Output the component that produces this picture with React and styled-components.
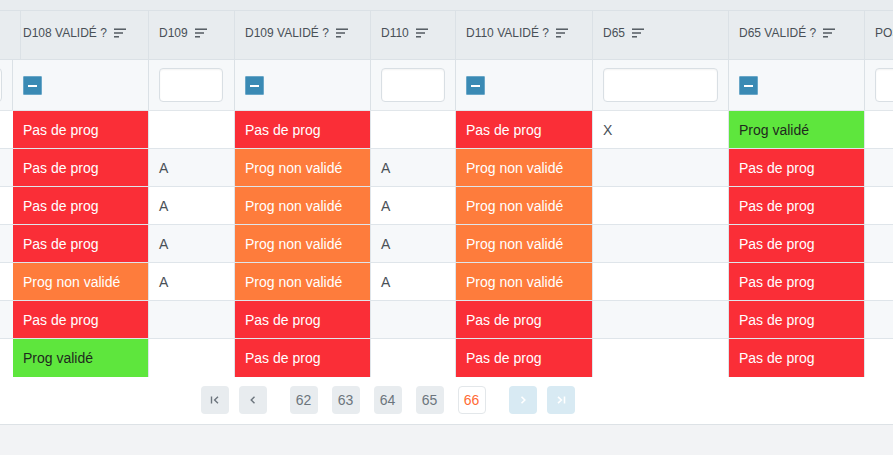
import styled, { createGlobalStyle } from 'styled-components';

const GlobalStyle = createGlobalStyle`
   html, body {
      margin: 0;
      padding: 0;
      background: #f2f3f5;
      font-family: 'Liberation Sans', Arial, sans-serif;
   }
   * {
      box-sizing: border-box;
   }
`;

const RED = 'red';
const ORANGE = 'orange';
const GREEN = 'green';

const columns = [
   { key: 'prev', label: '', type: 'text', width: 13 },
   { key: 'd108v', label: 'D108 Validé ?', type: 'check', width: 136 },
   { key: 'd109', label: 'D109', type: 'text', width: 86 },
   { key: 'd109v', label: 'D109 Validé ?', type: 'check', width: 136 },
   { key: 'd110', label: 'D110', type: 'text', width: 85 },
   { key: 'd110v', label: 'D110 Validé ?', type: 'check', width: 137 },
   { key: 'd65', label: 'D65', type: 'text', width: 136 },
   { key: 'd65v', label: 'D65 Validé ?', type: 'check', width: 136 },
   { key: 'poste', label: 'Poste', type: 'text', width: 136 },
];

const template = columns.map((c) => `${c.width}px`).join(' ');

const statusText = {
   [RED]: 'Pas de prog',
   [ORANGE]: 'Prog non validé',
   [GREEN]: 'Prog validé',
};

const rows = [
   { d108v: RED, d109: '', d109v: RED, d110: '', d110v: RED, d65: 'X', d65v: GREEN },
   { d108v: RED, d109: 'A', d109v: ORANGE, d110: 'A', d110v: ORANGE, d65: '', d65v: RED },
   { d108v: RED, d109: 'A', d109v: ORANGE, d110: 'A', d110v: ORANGE, d65: '', d65v: RED },
   { d108v: RED, d109: 'A', d109v: ORANGE, d110: 'A', d110v: ORANGE, d65: '', d65v: RED },
   { d108v: ORANGE, d109: 'A', d109v: ORANGE, d110: 'A', d110v: ORANGE, d65: '', d65v: RED },
   { d108v: RED, d109: '', d109v: RED, d110: '', d110v: RED, d65: '', d65v: RED },
   { d108v: GREEN, d109: '', d109v: RED, d110: '', d110v: RED, d65: '', d65v: RED },
];

const SortIcon = () => (
   <svg width="12" height="10" viewBox="0 0 12 10">
      <rect x="0" y="0.5" width="12" height="1.4" fill="#495057" />
      <rect x="0" y="4.3" width="9" height="1.4" fill="#495057" />
      <rect x="0" y="8.1" width="5" height="1.4" fill="#495057" />
   </svg>
);

const FirstIcon = () => (
   <svg width="10" height="10" viewBox="0 0 10 10">
      <path d="M1.5 1.5v7" stroke="#6c757d" strokeWidth="1.4" fill="none" />
      <path d="M8 1.8L4.6 5L8 8.2" stroke="#6c757d" strokeWidth="1.4" fill="none" />
   </svg>
);

const PrevIcon = () => (
   <svg width="10" height="10" viewBox="0 0 10 10">
      <path d="M6.5 1.8L3.2 5L6.5 8.2" stroke="#6c757d" strokeWidth="1.4" fill="none" />
   </svg>
);

const NextIcon = () => (
   <svg width="10" height="10" viewBox="0 0 10 10">
      <path d="M3.5 1.8L6.8 5L3.5 8.2" stroke="#ffffff" strokeWidth="1.6" fill="none" />
   </svg>
);

const LastIcon = () => (
   <svg width="10" height="10" viewBox="0 0 10 10">
      <path d="M2 1.8L5.4 5L2 8.2" stroke="#ffffff" strokeWidth="1.6" fill="none" />
      <path d="M8.5 1.5v7" stroke="#ffffff" strokeWidth="1.6" fill="none" />
   </svg>
);

export default function App() {
   return (
      <>
         <GlobalStyle />
         <Page>
            <TableScroll>
               <Table>
                  <TopStrip />
                  <HeadRow>
                     {columns.map((c) => (
                        <HeadCell key={c.key}>
                           {c.label && (
                              <>
                                 <span>{c.label}</span>
                                 {c.key !== 'poste' && <SortIcon />}
                              </>
                           )}
                        </HeadCell>
                     ))}
                  </HeadRow>
                  <FilterRow>
                     {columns.map((c) => (
                        <FilterCell key={c.key} $clip={c.key === 'prev'}>
                           {c.type === 'check' ? (
                              <MinusBox>
                                 <span />
                              </MinusBox>
                           ) : (
                              <FilterInput $narrow={c.width < 100} />
                           )}
                        </FilterCell>
                     ))}
                  </FilterRow>
                  {rows.map((r, i) => (
                     <BodyRow key={i} $striped={i % 2 === 1} $last={i === rows.length - 1}>
                        {columns.map((c) => {
                           const v = r[c.key];
                           if (c.type === 'check' && v) {
                              return (
                                 <StatusCell key={c.key} $status={v}>
                                    {statusText[v]}
                                 </StatusCell>
                              );
                           }
                           return <Cell key={c.key}>{v || ''}</Cell>;
                        })}
                     </BodyRow>
                  ))}
               </Table>
            </TableScroll>
            <Paginator>
               <NavGroup>
                  <PageButton><FirstIcon /></PageButton>
                  <PageButton><PrevIcon /></PageButton>
               </NavGroup>
               <Pages>
                  {[62, 63, 64, 65].map((p) => (
                     <PageButton key={p}>{p}</PageButton>
                  ))}
                  <PageButton $active>66</PageButton>
               </Pages>
               <NavGroup>
                  <PageButton $disabled><NextIcon /></PageButton>
                  <PageButton $disabled><LastIcon /></PageButton>
               </NavGroup>
            </Paginator>
         </Page>
      </>
   );
}

const Page = styled.div`
   width: 893px;
   height: 455px;
   overflow: hidden;
   background: #f2f3f5;
`;

const TableScroll = styled.div`
   width: 893px;
   overflow: hidden;
   background: #ffffff;
`;

const Table = styled.div`
   width: ${columns.reduce((s, c) => s + c.width, 0)}px;
   color: #495057;
`;

const TopStrip = styled.div`
   height: 11px;
   background: #e8ecef;
   border-bottom: 1px solid #dbe1e6;
`;

const RowGrid = styled.div`
   display: grid;
   grid-template-columns: ${template};
`;

const HeadRow = styled(RowGrid)`
   height: 49px;
   background: #e8ecef;
   border-bottom: 1px solid #dbe1e6;
`;

const HeadCell = styled.div`
   display: flex;
   align-items: center;
   gap: 7px;
   padding: 0 10px 5px;
   border-right: 1px solid #dbe1e6;
   font-size: 12px;
   text-transform: uppercase;
   color: #495057;
   white-space: nowrap;
   overflow: hidden;
`;

const FilterRow = styled(RowGrid)`
   height: 51px;
   background: #f6f8fa;
   border-bottom: 1px solid #e1e6ea;
`;

const FilterCell = styled.div`
   display: flex;
   align-items: center;
   justify-content: ${(p) => (p.$clip ? 'flex-end' : 'flex-start')};
   padding: ${(p) => (p.$clip ? '0 10px 0 0' : '0 10px')};
   border-right: 1px solid #dbe1e6;
   overflow: hidden;
`;

const FilterInput = styled.div`
   flex: ${(p) => (p.$narrow ? '0 0 64px' : '1 0 64px')};
   height: 34px;
   background: #ffffff;
   border: 1px solid #d9dfe4;
   border-radius: 4px;
   box-shadow: inset 0 1px 2px rgba(0, 0, 0, 0.05);
`;

const MinusBox = styled.div`
   width: 19px;
   height: 19px;
   margin-top: 1px;
   display: flex;
   align-items: center;
   justify-content: center;
   background: #3a8ab4;
   border: 1px solid #6aa7c8;
   border-radius: 1px;

   span {
      width: 9px;
      height: 2px;
      background: #ffffff;
   }
`;

const BodyRow = styled(RowGrid)`
   height: 38px;
   background: ${(p) => (p.$striped ? '#f6f8fa' : '#ffffff')};
   border-bottom: ${(p) => (p.$last ? 'none' : '1px solid #dfe5ea')};
`;

const Cell = styled.div`
   display: flex;
   align-items: center;
   padding: 0 10px;
   border-right: 1px solid #dfe5ea;
   font-size: 14px;
   color: #495057;
   white-space: nowrap;
   overflow: hidden;
`;

const statusColors = {
   [RED]: { bg: '#fa2e37', fg: '#ffffff' },
   [ORANGE]: { bg: '#fe7c3c', fg: '#ffffff' },
   [GREEN]: { bg: '#5ee63d', fg: '#1e2a1e' },
};

const StatusCell = styled(Cell)`
   background: ${(p) => statusColors[p.$status].bg};
   color: ${(p) => statusColors[p.$status].fg};
`;

const Paginator = styled.div`
   height: 48px;
   display: flex;
   align-items: center;
   justify-content: center;
   padding: 0 118px 2px 0;
   background: #ffffff;
   border-bottom: 1px solid #dde2e6;
`;

const NavGroup = styled.div`
   display: flex;
   gap: 10px;
`;

const Pages = styled.div`
   display: flex;
   gap: 14px;
   margin: 0 23px;
`;

const PageButton = styled.div`
   width: 28px;
   height: 28px;
   display: flex;
   align-items: center;
   justify-content: center;
   border-radius: 4px;
   font-size: 14px;
   color: ${(p) => (p.$active ? '#ff6b35' : '#6c757d')};
   background: ${(p) => (p.$active ? '#ffffff' : p.$disabled ? '#d8eaf3' : '#e8ecef')};
   border: 1px solid ${(p) => (p.$active ? '#e3e7ea' : 'transparent')};
`;
